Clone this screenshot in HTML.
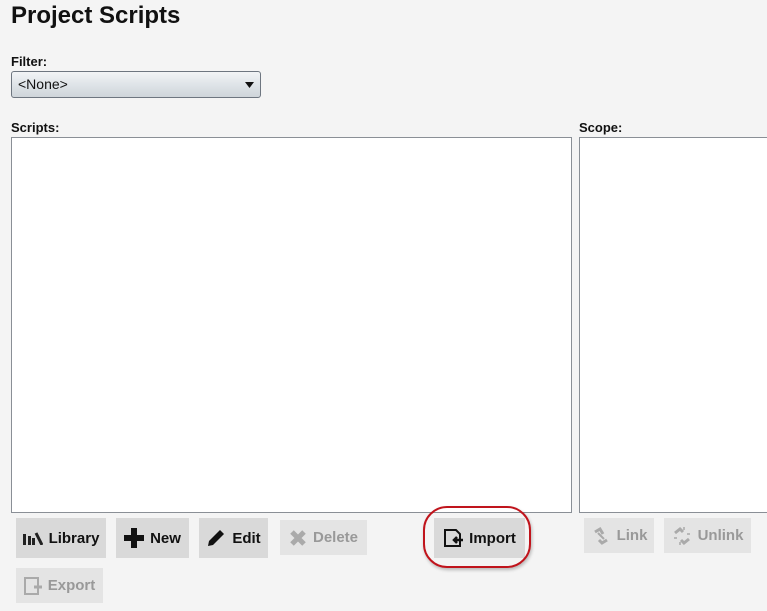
<!DOCTYPE html><html><head><style>
body{margin:0;width:767px;height:611px;background:#f4f4f4;font-family:"Liberation Sans",sans-serif;position:relative;overflow:hidden}
.a{position:absolute}
h1{position:absolute;left:11px;top:2px;margin:0;font-size:24px;font-weight:bold;color:#111}
.lbl{position:absolute;font-size:13px;font-weight:bold;color:#111}
.box{position:absolute;background:#fff;border:1px solid #8a8f96;box-sizing:border-box}
.btn{position:absolute;background:#d9d9d9;display:flex;align-items:center;justify-content:center;font-size:15px;font-weight:bold;color:#111;box-sizing:border-box;gap:6px}
.dis{background:#e4e4e4;color:#999}
</style></head><body>
<h1>Project Scripts</h1>
<div class="lbl" style="left:11px;top:54px">Filter:</div>
<div class="a" style="left:11px;top:71px;width:250px;height:27px;box-sizing:border-box;border:1px solid #6e7680;border-radius:3px;background:linear-gradient(#f2f4f6,#dfe4e8 50%,#cfd5da);font-size:14px;padding:4px 6px;color:#111">&lt;None&gt;<svg class="a" style="right:6px;top:10px" width="9" height="6"><path d="M0 0H9L4.5 6Z" fill="#111"/></svg></div>
<div class="lbl" style="left:11px;top:120px">Scripts:</div>
<div class="lbl" style="left:579px;top:120px">Scope:</div>
<div class="box" style="left:11px;top:137px;width:561px;height:376px"></div>
<div class="box" style="left:579px;top:137px;width:200px;height:376px"></div>
<div class="btn" style="left:16px;top:518px;width:90px;height:40px"><svg width="20" height="14"><rect x="0" y="3" width="3" height="11" fill="#222"/><rect x="5" y="5" width="3" height="9" fill="#222"/><rect x="9" y="7" width="3" height="7" fill="#222"/><path d="M13 2L19 14" stroke="#222" stroke-width="3"/></svg>Library</div>
<div class="btn" style="left:116px;top:518px;width:73px;height:40px"><svg width="20" height="20"><path d="M7 0h6v7h7v6h-7v7h-6v-7h-7v-6h7z" fill="#111"/></svg>New</div>
<div class="btn" style="left:199px;top:518px;width:69px;height:40px"><svg width="20" height="20"><path d="M2 18l1-5 11-11 4 4-11 11z" fill="#111"/></svg>Edit</div>
<div class="btn dis" style="left:280px;top:520px;width:87px;height:35px"><svg width="18" height="18"><path d="M3 3l12 12M15 3l-12 12" stroke="#aaa" stroke-width="5"/></svg>Delete</div>
<div class="btn dis" style="left:16px;top:568px;width:87px;height:35px"><svg width="18" height="18"><rect x="1" y="1" width="13" height="16" fill="none" stroke="#aaa" stroke-width="2"/><path d="M10 10h8" stroke="#aaa" stroke-width="3"/></svg>Export</div>
<div class="btn" style="left:434px;top:518px;width:91px;height:40px"><svg width="20" height="20"><path d="M2 2h11l4 4v12H2z" fill="none" stroke="#111" stroke-width="2"/><path d="M20 12h-8M14 9l-3 3 3 3" stroke="#111" stroke-width="2.5" fill="none"/></svg>Import</div>
<div class="a" style="left:423px;top:506px;width:108px;height:62px;box-sizing:border-box;border:2px solid #c0141c;border-radius:24px;box-shadow:1px 2px 3px rgba(0,0,0,.25)"></div>
<div class="btn dis" style="left:584px;top:518px;width:70px;height:35px"><svg width="20" height="20"><path d="M4 6l5-3 3 5M8 14l3 3 5-3" stroke="#aaa" stroke-width="3" fill="none"/><path d="M7 7l6 6" stroke="#aaa" stroke-width="2"/></svg>Link</div>
<div class="btn dis" style="left:664px;top:518px;width:87px;height:35px"><svg width="20" height="20"><path d="M3 7l5-4 3 3M9 14l3 3 5-4" stroke="#aaa" stroke-width="3" fill="none"/><path d="M2 12h3M15 8h3M12 1v3M8 16v3" stroke="#aaa" stroke-width="1.5"/></svg>Unlink</div>
</body></html>
